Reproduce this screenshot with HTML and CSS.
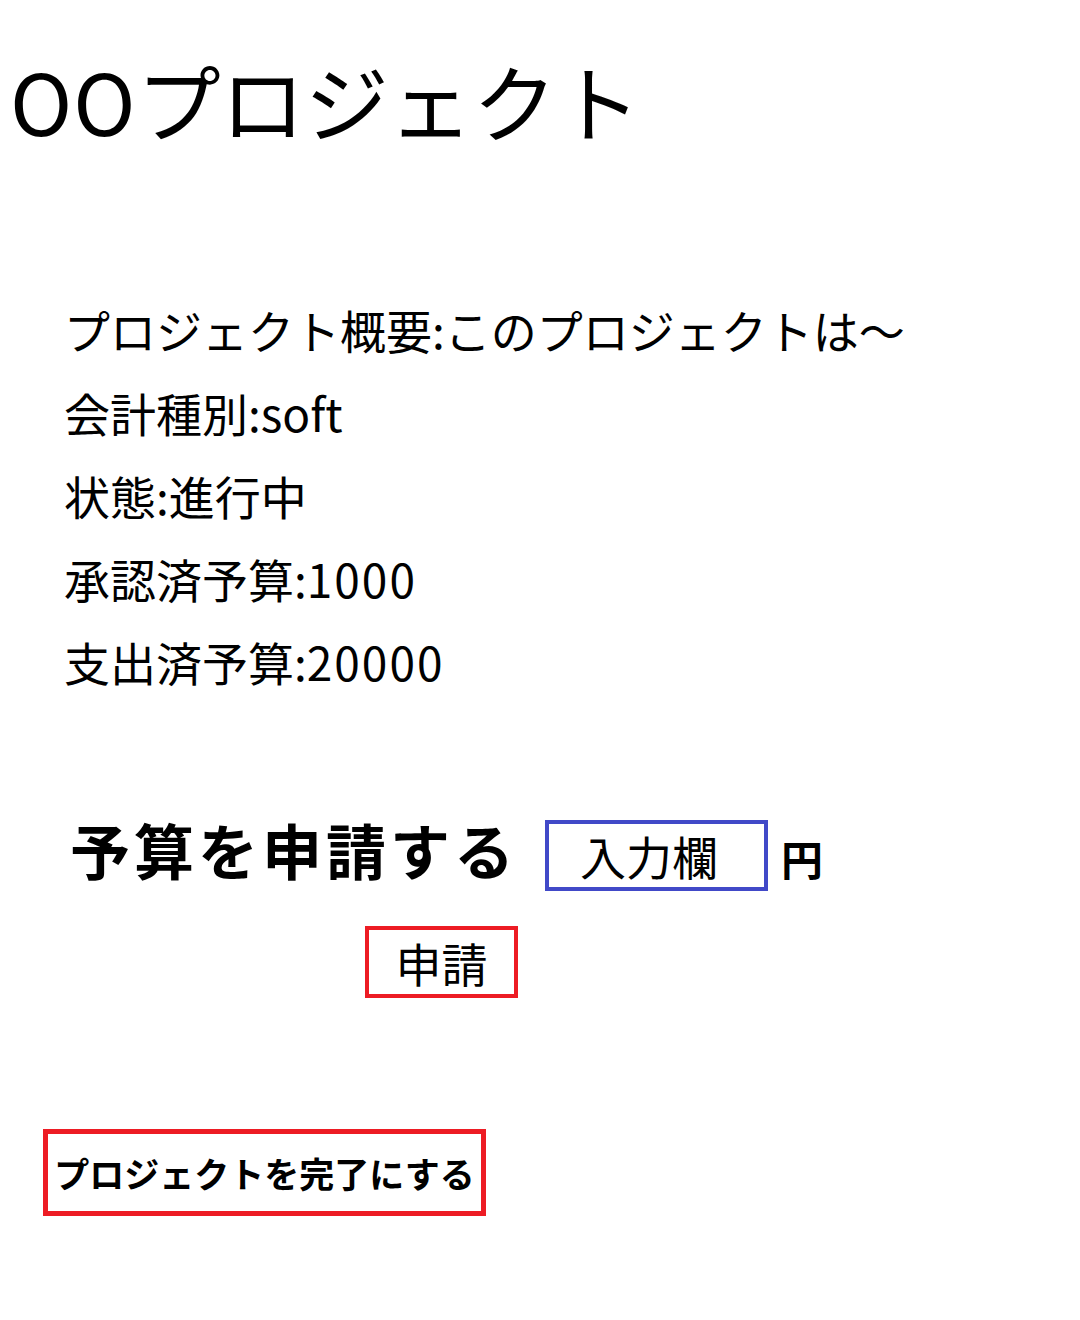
FILE: index.html
```html
<!DOCTYPE html>
<html lang="ja">
<head>
<meta charset="utf-8">
<title>OOプロジェクト</title>
<link rel="stylesheet" href="styles.css">
</head>
<body>
<h1 class="title"><span class="title-latin">OO</span>プロジェクト</h1>
<div class="details">
  <p class="detail">プロジェクト概要:このプロジェクトは～</p>
  <p class="detail">会計種別:soft</p>
  <p class="detail">状態:進行中</p>
  <p class="detail">承認済予算:<span class="num">1000</span></p>
  <p class="detail">支出済予算:<span class="num">20000</span></p>
</div>
<div class="apply-row">
  <h2 class="apply-title">予算を申請する</h2>
  <input class="amount-input" type="text" value="入力欄">
  <span class="unit">円</span>
</div>
<div class="submit-row">
  <button class="submit-btn" type="button">申請</button>
</div>
<div class="complete-row">
  <button class="complete-btn" type="button">プロジェクトを完了にする</button>
</div>
</body>
</html>
```
FILE: styles.css
```css
html, body {
  margin: 0;
  padding: 0;
  background: #ffffff;
  color: #000000;
  font-family: "Noto Sans CJK JP", "Noto Sans", sans-serif;
}

.title {
  margin: 58px 0 0 10px;
  font-size: 84px;
  line-height: 84px;
  font-weight: 400;
  white-space: nowrap;
}

.title-latin {
  letter-spacing: 1px;
}

.details {
  margin-top: 146px;
  padding-left: 64px;
}

.detail {
  margin: 0;
  font-size: 46px;
  line-height: 83px;
  white-space: nowrap;
}

.num {
  letter-spacing: 2px;
}

.apply-row {
  display: flex;
  align-items: center;
  margin-top: 117px;
  padding-left: 70px;
  height: 70px;
}

.apply-title {
  margin: 0 27px 12px 0;
  font-size: 60px;
  line-height: 70px;
  font-weight: 700;
  letter-spacing: 4px;
  white-space: nowrap;
}

.amount-input {
  box-sizing: border-box;
  width: 223px;
  height: 71px;
  margin: 0 13px 0 0;
  padding: 0 0 0 31px;
  border: 4px solid #4149c8;
  border-radius: 0;
  outline: none;
  background: #ffffff;
  color: #000000;
  font-family: "Noto Sans CJK JP", "Noto Sans", sans-serif;
  font-size: 46px;
}

.unit {
  font-size: 42px;
  font-weight: 700;
  line-height: 70px;
  margin-top: 6px;
}

.submit-row {
  margin-top: 36px;
  padding-left: 365px;
}

.submit-btn {
  box-sizing: border-box;
  width: 153px;
  height: 72px;
  padding: 0;
  border: 4px solid #ed1c24;
  border-radius: 0;
  background: #ffffff;
  color: #000000;
  font-family: "Noto Sans CJK JP", "Noto Sans", sans-serif;
  font-size: 46px;
  line-height: 1;
}

.complete-row {
  margin-top: 131px;
  padding-left: 43px;
}

.complete-btn {
  box-sizing: border-box;
  width: 443px;
  height: 87px;
  padding: 0;
  border: 5px solid #ed1c24;
  border-radius: 0;
  background: #ffffff;
  color: #000000;
  font-family: "Noto Sans CJK JP", "Noto Sans", sans-serif;
  font-size: 35px;
  font-weight: 700;
  line-height: 1;
  white-space: nowrap;
}
```
